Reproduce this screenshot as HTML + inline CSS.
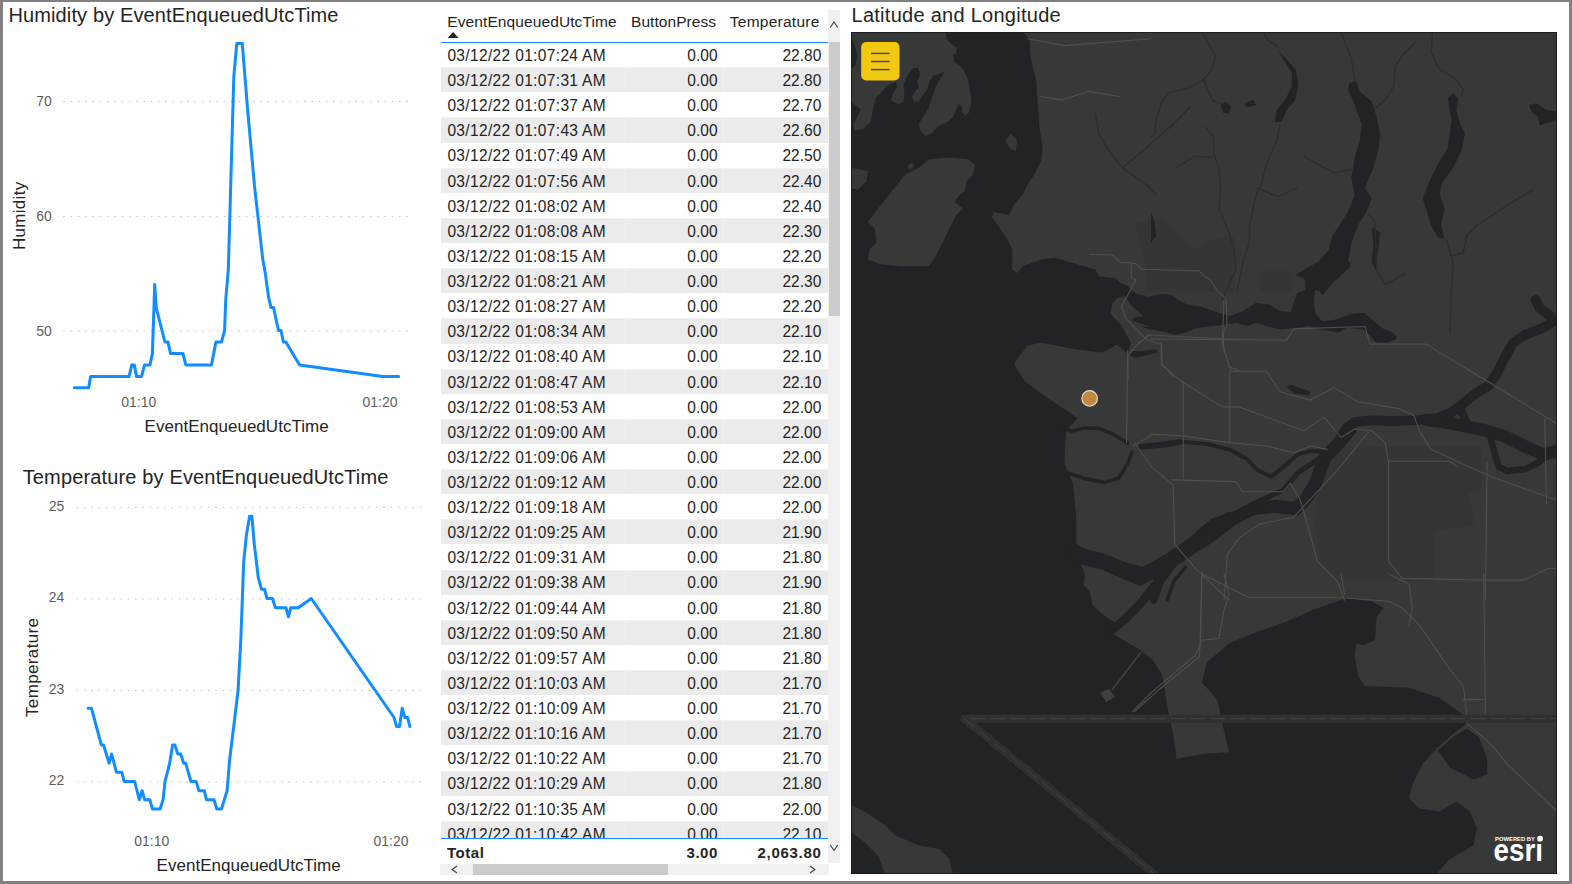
<!DOCTYPE html>
<html><head><meta charset="utf-8"><style>
html,body{margin:0;padding:0;}
body{width:1572px;height:884px;position:relative;overflow:hidden;background:#808080;font-family:"Liberation Sans", sans-serif;}
#w{position:absolute;left:3px;top:2px;width:1566px;height:879px;background:#fff;}
.t{position:absolute;white-space:nowrap;font-family:"Liberation Sans", sans-serif;}
</style></head><body><div id="w"></div>
<div class="t" style="left:8.40px;top:5.07px;font-size:20px;line-height:20px;color:#252423;font-weight:normal;letter-spacing:0.13px;">Humidity by EventEnqueuedUtcTime</div><div class="t" style="left:851.50px;top:5.07px;font-size:20px;line-height:20px;color:#252423;font-weight:normal;letter-spacing:0.27px;">Latitude and Longitude</div><div class="t" style="left:22.70px;top:467.07px;font-size:20px;line-height:20px;color:#252423;font-weight:normal;letter-spacing:0.15px;">Temperature by EventEnqueuedUtcTime</div><div style="position:absolute;left:441px;top:43px;width:387px;height:795px;overflow:hidden;"><div style="position:absolute;left:0;top:-0.92px;width:387px;height:25.12px;background:#ffffff;"></div><div class="t" style="left:6.40px;top:4.96px;font-size:15.5px;line-height:15.5px;color:#252423;font-weight:normal;letter-spacing:0.35px;transform:scaleY(1.08);transform-origin:0 13.12px;">03/12/22 01:07:24 AM</div><div class="t" style="left:0;width:276.5px;text-align:right;top:4.96px;font-size:15.5px;line-height:15.5px;color:#252423;transform:scaleY(1.08);transform-origin:0 13.12px;">0.00</div><div class="t" style="left:0;width:380.3px;text-align:right;top:4.96px;font-size:15.5px;line-height:15.5px;color:#252423;transform:scaleY(1.08);transform-origin:0 13.12px;">22.80</div><div style="position:absolute;left:0;top:24.20px;width:387px;height:25.12px;background:#ebebeb;"></div><div style="position:absolute;left:0;top:24.20px;width:387px;height:1px;background:#f1f1f1;"></div><div class="t" style="left:6.40px;top:30.08px;font-size:15.5px;line-height:15.5px;color:#252423;font-weight:normal;letter-spacing:0.35px;transform:scaleY(1.08);transform-origin:0 13.12px;">03/12/22 01:07:31 AM</div><div class="t" style="left:0;width:276.5px;text-align:right;top:30.08px;font-size:15.5px;line-height:15.5px;color:#252423;transform:scaleY(1.08);transform-origin:0 13.12px;">0.00</div><div class="t" style="left:0;width:380.3px;text-align:right;top:30.08px;font-size:15.5px;line-height:15.5px;color:#252423;transform:scaleY(1.08);transform-origin:0 13.12px;">22.80</div><div style="position:absolute;left:0;top:49.32px;width:387px;height:25.12px;background:#ffffff;"></div><div class="t" style="left:6.40px;top:55.20px;font-size:15.5px;line-height:15.5px;color:#252423;font-weight:normal;letter-spacing:0.35px;transform:scaleY(1.08);transform-origin:0 13.12px;">03/12/22 01:07:37 AM</div><div class="t" style="left:0;width:276.5px;text-align:right;top:55.20px;font-size:15.5px;line-height:15.5px;color:#252423;transform:scaleY(1.08);transform-origin:0 13.12px;">0.00</div><div class="t" style="left:0;width:380.3px;text-align:right;top:55.20px;font-size:15.5px;line-height:15.5px;color:#252423;transform:scaleY(1.08);transform-origin:0 13.12px;">22.70</div><div style="position:absolute;left:0;top:74.44px;width:387px;height:25.12px;background:#ebebeb;"></div><div style="position:absolute;left:0;top:74.44px;width:387px;height:1px;background:#f1f1f1;"></div><div class="t" style="left:6.40px;top:80.32px;font-size:15.5px;line-height:15.5px;color:#252423;font-weight:normal;letter-spacing:0.35px;transform:scaleY(1.08);transform-origin:0 13.12px;">03/12/22 01:07:43 AM</div><div class="t" style="left:0;width:276.5px;text-align:right;top:80.32px;font-size:15.5px;line-height:15.5px;color:#252423;transform:scaleY(1.08);transform-origin:0 13.12px;">0.00</div><div class="t" style="left:0;width:380.3px;text-align:right;top:80.32px;font-size:15.5px;line-height:15.5px;color:#252423;transform:scaleY(1.08);transform-origin:0 13.12px;">22.60</div><div style="position:absolute;left:0;top:99.56px;width:387px;height:25.12px;background:#ffffff;"></div><div class="t" style="left:6.40px;top:105.44px;font-size:15.5px;line-height:15.5px;color:#252423;font-weight:normal;letter-spacing:0.35px;transform:scaleY(1.08);transform-origin:0 13.12px;">03/12/22 01:07:49 AM</div><div class="t" style="left:0;width:276.5px;text-align:right;top:105.44px;font-size:15.5px;line-height:15.5px;color:#252423;transform:scaleY(1.08);transform-origin:0 13.12px;">0.00</div><div class="t" style="left:0;width:380.3px;text-align:right;top:105.44px;font-size:15.5px;line-height:15.5px;color:#252423;transform:scaleY(1.08);transform-origin:0 13.12px;">22.50</div><div style="position:absolute;left:0;top:124.68px;width:387px;height:25.12px;background:#ebebeb;"></div><div style="position:absolute;left:0;top:124.68px;width:387px;height:1px;background:#f1f1f1;"></div><div class="t" style="left:6.40px;top:130.56px;font-size:15.5px;line-height:15.5px;color:#252423;font-weight:normal;letter-spacing:0.35px;transform:scaleY(1.08);transform-origin:0 13.12px;">03/12/22 01:07:56 AM</div><div class="t" style="left:0;width:276.5px;text-align:right;top:130.56px;font-size:15.5px;line-height:15.5px;color:#252423;transform:scaleY(1.08);transform-origin:0 13.12px;">0.00</div><div class="t" style="left:0;width:380.3px;text-align:right;top:130.56px;font-size:15.5px;line-height:15.5px;color:#252423;transform:scaleY(1.08);transform-origin:0 13.12px;">22.40</div><div style="position:absolute;left:0;top:149.80px;width:387px;height:25.12px;background:#ffffff;"></div><div class="t" style="left:6.40px;top:155.68px;font-size:15.5px;line-height:15.5px;color:#252423;font-weight:normal;letter-spacing:0.35px;transform:scaleY(1.08);transform-origin:0 13.12px;">03/12/22 01:08:02 AM</div><div class="t" style="left:0;width:276.5px;text-align:right;top:155.68px;font-size:15.5px;line-height:15.5px;color:#252423;transform:scaleY(1.08);transform-origin:0 13.12px;">0.00</div><div class="t" style="left:0;width:380.3px;text-align:right;top:155.68px;font-size:15.5px;line-height:15.5px;color:#252423;transform:scaleY(1.08);transform-origin:0 13.12px;">22.40</div><div style="position:absolute;left:0;top:174.92px;width:387px;height:25.12px;background:#ebebeb;"></div><div style="position:absolute;left:0;top:174.92px;width:387px;height:1px;background:#f1f1f1;"></div><div class="t" style="left:6.40px;top:180.80px;font-size:15.5px;line-height:15.5px;color:#252423;font-weight:normal;letter-spacing:0.35px;transform:scaleY(1.08);transform-origin:0 13.12px;">03/12/22 01:08:08 AM</div><div class="t" style="left:0;width:276.5px;text-align:right;top:180.80px;font-size:15.5px;line-height:15.5px;color:#252423;transform:scaleY(1.08);transform-origin:0 13.12px;">0.00</div><div class="t" style="left:0;width:380.3px;text-align:right;top:180.80px;font-size:15.5px;line-height:15.5px;color:#252423;transform:scaleY(1.08);transform-origin:0 13.12px;">22.30</div><div style="position:absolute;left:0;top:200.04px;width:387px;height:25.12px;background:#ffffff;"></div><div class="t" style="left:6.40px;top:205.92px;font-size:15.5px;line-height:15.5px;color:#252423;font-weight:normal;letter-spacing:0.35px;transform:scaleY(1.08);transform-origin:0 13.12px;">03/12/22 01:08:15 AM</div><div class="t" style="left:0;width:276.5px;text-align:right;top:205.92px;font-size:15.5px;line-height:15.5px;color:#252423;transform:scaleY(1.08);transform-origin:0 13.12px;">0.00</div><div class="t" style="left:0;width:380.3px;text-align:right;top:205.92px;font-size:15.5px;line-height:15.5px;color:#252423;transform:scaleY(1.08);transform-origin:0 13.12px;">22.20</div><div style="position:absolute;left:0;top:225.16px;width:387px;height:25.12px;background:#ebebeb;"></div><div style="position:absolute;left:0;top:225.16px;width:387px;height:1px;background:#f1f1f1;"></div><div class="t" style="left:6.40px;top:231.04px;font-size:15.5px;line-height:15.5px;color:#252423;font-weight:normal;letter-spacing:0.35px;transform:scaleY(1.08);transform-origin:0 13.12px;">03/12/22 01:08:21 AM</div><div class="t" style="left:0;width:276.5px;text-align:right;top:231.04px;font-size:15.5px;line-height:15.5px;color:#252423;transform:scaleY(1.08);transform-origin:0 13.12px;">0.00</div><div class="t" style="left:0;width:380.3px;text-align:right;top:231.04px;font-size:15.5px;line-height:15.5px;color:#252423;transform:scaleY(1.08);transform-origin:0 13.12px;">22.30</div><div style="position:absolute;left:0;top:250.28px;width:387px;height:25.12px;background:#ffffff;"></div><div class="t" style="left:6.40px;top:256.16px;font-size:15.5px;line-height:15.5px;color:#252423;font-weight:normal;letter-spacing:0.35px;transform:scaleY(1.08);transform-origin:0 13.12px;">03/12/22 01:08:27 AM</div><div class="t" style="left:0;width:276.5px;text-align:right;top:256.16px;font-size:15.5px;line-height:15.5px;color:#252423;transform:scaleY(1.08);transform-origin:0 13.12px;">0.00</div><div class="t" style="left:0;width:380.3px;text-align:right;top:256.16px;font-size:15.5px;line-height:15.5px;color:#252423;transform:scaleY(1.08);transform-origin:0 13.12px;">22.20</div><div style="position:absolute;left:0;top:275.40px;width:387px;height:25.12px;background:#ebebeb;"></div><div style="position:absolute;left:0;top:275.40px;width:387px;height:1px;background:#f1f1f1;"></div><div class="t" style="left:6.40px;top:281.28px;font-size:15.5px;line-height:15.5px;color:#252423;font-weight:normal;letter-spacing:0.35px;transform:scaleY(1.08);transform-origin:0 13.12px;">03/12/22 01:08:34 AM</div><div class="t" style="left:0;width:276.5px;text-align:right;top:281.28px;font-size:15.5px;line-height:15.5px;color:#252423;transform:scaleY(1.08);transform-origin:0 13.12px;">0.00</div><div class="t" style="left:0;width:380.3px;text-align:right;top:281.28px;font-size:15.5px;line-height:15.5px;color:#252423;transform:scaleY(1.08);transform-origin:0 13.12px;">22.10</div><div style="position:absolute;left:0;top:300.52px;width:387px;height:25.12px;background:#ffffff;"></div><div class="t" style="left:6.40px;top:306.40px;font-size:15.5px;line-height:15.5px;color:#252423;font-weight:normal;letter-spacing:0.35px;transform:scaleY(1.08);transform-origin:0 13.12px;">03/12/22 01:08:40 AM</div><div class="t" style="left:0;width:276.5px;text-align:right;top:306.40px;font-size:15.5px;line-height:15.5px;color:#252423;transform:scaleY(1.08);transform-origin:0 13.12px;">0.00</div><div class="t" style="left:0;width:380.3px;text-align:right;top:306.40px;font-size:15.5px;line-height:15.5px;color:#252423;transform:scaleY(1.08);transform-origin:0 13.12px;">22.10</div><div style="position:absolute;left:0;top:325.64px;width:387px;height:25.12px;background:#ebebeb;"></div><div style="position:absolute;left:0;top:325.64px;width:387px;height:1px;background:#f1f1f1;"></div><div class="t" style="left:6.40px;top:331.52px;font-size:15.5px;line-height:15.5px;color:#252423;font-weight:normal;letter-spacing:0.35px;transform:scaleY(1.08);transform-origin:0 13.12px;">03/12/22 01:08:47 AM</div><div class="t" style="left:0;width:276.5px;text-align:right;top:331.52px;font-size:15.5px;line-height:15.5px;color:#252423;transform:scaleY(1.08);transform-origin:0 13.12px;">0.00</div><div class="t" style="left:0;width:380.3px;text-align:right;top:331.52px;font-size:15.5px;line-height:15.5px;color:#252423;transform:scaleY(1.08);transform-origin:0 13.12px;">22.10</div><div style="position:absolute;left:0;top:350.76px;width:387px;height:25.12px;background:#ffffff;"></div><div class="t" style="left:6.40px;top:356.64px;font-size:15.5px;line-height:15.5px;color:#252423;font-weight:normal;letter-spacing:0.35px;transform:scaleY(1.08);transform-origin:0 13.12px;">03/12/22 01:08:53 AM</div><div class="t" style="left:0;width:276.5px;text-align:right;top:356.64px;font-size:15.5px;line-height:15.5px;color:#252423;transform:scaleY(1.08);transform-origin:0 13.12px;">0.00</div><div class="t" style="left:0;width:380.3px;text-align:right;top:356.64px;font-size:15.5px;line-height:15.5px;color:#252423;transform:scaleY(1.08);transform-origin:0 13.12px;">22.00</div><div style="position:absolute;left:0;top:375.88px;width:387px;height:25.12px;background:#ebebeb;"></div><div style="position:absolute;left:0;top:375.88px;width:387px;height:1px;background:#f1f1f1;"></div><div class="t" style="left:6.40px;top:381.76px;font-size:15.5px;line-height:15.5px;color:#252423;font-weight:normal;letter-spacing:0.35px;transform:scaleY(1.08);transform-origin:0 13.12px;">03/12/22 01:09:00 AM</div><div class="t" style="left:0;width:276.5px;text-align:right;top:381.76px;font-size:15.5px;line-height:15.5px;color:#252423;transform:scaleY(1.08);transform-origin:0 13.12px;">0.00</div><div class="t" style="left:0;width:380.3px;text-align:right;top:381.76px;font-size:15.5px;line-height:15.5px;color:#252423;transform:scaleY(1.08);transform-origin:0 13.12px;">22.00</div><div style="position:absolute;left:0;top:401.00px;width:387px;height:25.12px;background:#ffffff;"></div><div class="t" style="left:6.40px;top:406.88px;font-size:15.5px;line-height:15.5px;color:#252423;font-weight:normal;letter-spacing:0.35px;transform:scaleY(1.08);transform-origin:0 13.12px;">03/12/22 01:09:06 AM</div><div class="t" style="left:0;width:276.5px;text-align:right;top:406.88px;font-size:15.5px;line-height:15.5px;color:#252423;transform:scaleY(1.08);transform-origin:0 13.12px;">0.00</div><div class="t" style="left:0;width:380.3px;text-align:right;top:406.88px;font-size:15.5px;line-height:15.5px;color:#252423;transform:scaleY(1.08);transform-origin:0 13.12px;">22.00</div><div style="position:absolute;left:0;top:426.12px;width:387px;height:25.12px;background:#ebebeb;"></div><div style="position:absolute;left:0;top:426.12px;width:387px;height:1px;background:#f1f1f1;"></div><div class="t" style="left:6.40px;top:432.00px;font-size:15.5px;line-height:15.5px;color:#252423;font-weight:normal;letter-spacing:0.35px;transform:scaleY(1.08);transform-origin:0 13.12px;">03/12/22 01:09:12 AM</div><div class="t" style="left:0;width:276.5px;text-align:right;top:432.00px;font-size:15.5px;line-height:15.5px;color:#252423;transform:scaleY(1.08);transform-origin:0 13.12px;">0.00</div><div class="t" style="left:0;width:380.3px;text-align:right;top:432.00px;font-size:15.5px;line-height:15.5px;color:#252423;transform:scaleY(1.08);transform-origin:0 13.12px;">22.00</div><div style="position:absolute;left:0;top:451.24px;width:387px;height:25.12px;background:#ffffff;"></div><div class="t" style="left:6.40px;top:457.12px;font-size:15.5px;line-height:15.5px;color:#252423;font-weight:normal;letter-spacing:0.35px;transform:scaleY(1.08);transform-origin:0 13.12px;">03/12/22 01:09:18 AM</div><div class="t" style="left:0;width:276.5px;text-align:right;top:457.12px;font-size:15.5px;line-height:15.5px;color:#252423;transform:scaleY(1.08);transform-origin:0 13.12px;">0.00</div><div class="t" style="left:0;width:380.3px;text-align:right;top:457.12px;font-size:15.5px;line-height:15.5px;color:#252423;transform:scaleY(1.08);transform-origin:0 13.12px;">22.00</div><div style="position:absolute;left:0;top:476.36px;width:387px;height:25.12px;background:#ebebeb;"></div><div style="position:absolute;left:0;top:476.36px;width:387px;height:1px;background:#f1f1f1;"></div><div class="t" style="left:6.40px;top:482.24px;font-size:15.5px;line-height:15.5px;color:#252423;font-weight:normal;letter-spacing:0.35px;transform:scaleY(1.08);transform-origin:0 13.12px;">03/12/22 01:09:25 AM</div><div class="t" style="left:0;width:276.5px;text-align:right;top:482.24px;font-size:15.5px;line-height:15.5px;color:#252423;transform:scaleY(1.08);transform-origin:0 13.12px;">0.00</div><div class="t" style="left:0;width:380.3px;text-align:right;top:482.24px;font-size:15.5px;line-height:15.5px;color:#252423;transform:scaleY(1.08);transform-origin:0 13.12px;">21.90</div><div style="position:absolute;left:0;top:501.48px;width:387px;height:25.12px;background:#ffffff;"></div><div class="t" style="left:6.40px;top:507.36px;font-size:15.5px;line-height:15.5px;color:#252423;font-weight:normal;letter-spacing:0.35px;transform:scaleY(1.08);transform-origin:0 13.12px;">03/12/22 01:09:31 AM</div><div class="t" style="left:0;width:276.5px;text-align:right;top:507.36px;font-size:15.5px;line-height:15.5px;color:#252423;transform:scaleY(1.08);transform-origin:0 13.12px;">0.00</div><div class="t" style="left:0;width:380.3px;text-align:right;top:507.36px;font-size:15.5px;line-height:15.5px;color:#252423;transform:scaleY(1.08);transform-origin:0 13.12px;">21.80</div><div style="position:absolute;left:0;top:526.60px;width:387px;height:25.12px;background:#ebebeb;"></div><div style="position:absolute;left:0;top:526.60px;width:387px;height:1px;background:#f1f1f1;"></div><div class="t" style="left:6.40px;top:532.48px;font-size:15.5px;line-height:15.5px;color:#252423;font-weight:normal;letter-spacing:0.35px;transform:scaleY(1.08);transform-origin:0 13.12px;">03/12/22 01:09:38 AM</div><div class="t" style="left:0;width:276.5px;text-align:right;top:532.48px;font-size:15.5px;line-height:15.5px;color:#252423;transform:scaleY(1.08);transform-origin:0 13.12px;">0.00</div><div class="t" style="left:0;width:380.3px;text-align:right;top:532.48px;font-size:15.5px;line-height:15.5px;color:#252423;transform:scaleY(1.08);transform-origin:0 13.12px;">21.90</div><div style="position:absolute;left:0;top:551.72px;width:387px;height:25.12px;background:#ffffff;"></div><div class="t" style="left:6.40px;top:557.60px;font-size:15.5px;line-height:15.5px;color:#252423;font-weight:normal;letter-spacing:0.35px;transform:scaleY(1.08);transform-origin:0 13.12px;">03/12/22 01:09:44 AM</div><div class="t" style="left:0;width:276.5px;text-align:right;top:557.60px;font-size:15.5px;line-height:15.5px;color:#252423;transform:scaleY(1.08);transform-origin:0 13.12px;">0.00</div><div class="t" style="left:0;width:380.3px;text-align:right;top:557.60px;font-size:15.5px;line-height:15.5px;color:#252423;transform:scaleY(1.08);transform-origin:0 13.12px;">21.80</div><div style="position:absolute;left:0;top:576.84px;width:387px;height:25.12px;background:#ebebeb;"></div><div style="position:absolute;left:0;top:576.84px;width:387px;height:1px;background:#f1f1f1;"></div><div class="t" style="left:6.40px;top:582.72px;font-size:15.5px;line-height:15.5px;color:#252423;font-weight:normal;letter-spacing:0.35px;transform:scaleY(1.08);transform-origin:0 13.12px;">03/12/22 01:09:50 AM</div><div class="t" style="left:0;width:276.5px;text-align:right;top:582.72px;font-size:15.5px;line-height:15.5px;color:#252423;transform:scaleY(1.08);transform-origin:0 13.12px;">0.00</div><div class="t" style="left:0;width:380.3px;text-align:right;top:582.72px;font-size:15.5px;line-height:15.5px;color:#252423;transform:scaleY(1.08);transform-origin:0 13.12px;">21.80</div><div style="position:absolute;left:0;top:601.96px;width:387px;height:25.12px;background:#ffffff;"></div><div class="t" style="left:6.40px;top:607.84px;font-size:15.5px;line-height:15.5px;color:#252423;font-weight:normal;letter-spacing:0.35px;transform:scaleY(1.08);transform-origin:0 13.12px;">03/12/22 01:09:57 AM</div><div class="t" style="left:0;width:276.5px;text-align:right;top:607.84px;font-size:15.5px;line-height:15.5px;color:#252423;transform:scaleY(1.08);transform-origin:0 13.12px;">0.00</div><div class="t" style="left:0;width:380.3px;text-align:right;top:607.84px;font-size:15.5px;line-height:15.5px;color:#252423;transform:scaleY(1.08);transform-origin:0 13.12px;">21.80</div><div style="position:absolute;left:0;top:627.08px;width:387px;height:25.12px;background:#ebebeb;"></div><div style="position:absolute;left:0;top:627.08px;width:387px;height:1px;background:#f1f1f1;"></div><div class="t" style="left:6.40px;top:632.96px;font-size:15.5px;line-height:15.5px;color:#252423;font-weight:normal;letter-spacing:0.35px;transform:scaleY(1.08);transform-origin:0 13.12px;">03/12/22 01:10:03 AM</div><div class="t" style="left:0;width:276.5px;text-align:right;top:632.96px;font-size:15.5px;line-height:15.5px;color:#252423;transform:scaleY(1.08);transform-origin:0 13.12px;">0.00</div><div class="t" style="left:0;width:380.3px;text-align:right;top:632.96px;font-size:15.5px;line-height:15.5px;color:#252423;transform:scaleY(1.08);transform-origin:0 13.12px;">21.70</div><div style="position:absolute;left:0;top:652.20px;width:387px;height:25.12px;background:#ffffff;"></div><div class="t" style="left:6.40px;top:658.08px;font-size:15.5px;line-height:15.5px;color:#252423;font-weight:normal;letter-spacing:0.35px;transform:scaleY(1.08);transform-origin:0 13.12px;">03/12/22 01:10:09 AM</div><div class="t" style="left:0;width:276.5px;text-align:right;top:658.08px;font-size:15.5px;line-height:15.5px;color:#252423;transform:scaleY(1.08);transform-origin:0 13.12px;">0.00</div><div class="t" style="left:0;width:380.3px;text-align:right;top:658.08px;font-size:15.5px;line-height:15.5px;color:#252423;transform:scaleY(1.08);transform-origin:0 13.12px;">21.70</div><div style="position:absolute;left:0;top:677.32px;width:387px;height:25.12px;background:#ebebeb;"></div><div style="position:absolute;left:0;top:677.32px;width:387px;height:1px;background:#f1f1f1;"></div><div class="t" style="left:6.40px;top:683.20px;font-size:15.5px;line-height:15.5px;color:#252423;font-weight:normal;letter-spacing:0.35px;transform:scaleY(1.08);transform-origin:0 13.12px;">03/12/22 01:10:16 AM</div><div class="t" style="left:0;width:276.5px;text-align:right;top:683.20px;font-size:15.5px;line-height:15.5px;color:#252423;transform:scaleY(1.08);transform-origin:0 13.12px;">0.00</div><div class="t" style="left:0;width:380.3px;text-align:right;top:683.20px;font-size:15.5px;line-height:15.5px;color:#252423;transform:scaleY(1.08);transform-origin:0 13.12px;">21.70</div><div style="position:absolute;left:0;top:702.44px;width:387px;height:25.12px;background:#ffffff;"></div><div class="t" style="left:6.40px;top:708.32px;font-size:15.5px;line-height:15.5px;color:#252423;font-weight:normal;letter-spacing:0.35px;transform:scaleY(1.08);transform-origin:0 13.12px;">03/12/22 01:10:22 AM</div><div class="t" style="left:0;width:276.5px;text-align:right;top:708.32px;font-size:15.5px;line-height:15.5px;color:#252423;transform:scaleY(1.08);transform-origin:0 13.12px;">0.00</div><div class="t" style="left:0;width:380.3px;text-align:right;top:708.32px;font-size:15.5px;line-height:15.5px;color:#252423;transform:scaleY(1.08);transform-origin:0 13.12px;">21.70</div><div style="position:absolute;left:0;top:727.56px;width:387px;height:25.12px;background:#ebebeb;"></div><div style="position:absolute;left:0;top:727.56px;width:387px;height:1px;background:#f1f1f1;"></div><div class="t" style="left:6.40px;top:733.44px;font-size:15.5px;line-height:15.5px;color:#252423;font-weight:normal;letter-spacing:0.35px;transform:scaleY(1.08);transform-origin:0 13.12px;">03/12/22 01:10:29 AM</div><div class="t" style="left:0;width:276.5px;text-align:right;top:733.44px;font-size:15.5px;line-height:15.5px;color:#252423;transform:scaleY(1.08);transform-origin:0 13.12px;">0.00</div><div class="t" style="left:0;width:380.3px;text-align:right;top:733.44px;font-size:15.5px;line-height:15.5px;color:#252423;transform:scaleY(1.08);transform-origin:0 13.12px;">21.80</div><div style="position:absolute;left:0;top:752.68px;width:387px;height:25.12px;background:#ffffff;"></div><div class="t" style="left:6.40px;top:758.56px;font-size:15.5px;line-height:15.5px;color:#252423;font-weight:normal;letter-spacing:0.35px;transform:scaleY(1.08);transform-origin:0 13.12px;">03/12/22 01:10:35 AM</div><div class="t" style="left:0;width:276.5px;text-align:right;top:758.56px;font-size:15.5px;line-height:15.5px;color:#252423;transform:scaleY(1.08);transform-origin:0 13.12px;">0.00</div><div class="t" style="left:0;width:380.3px;text-align:right;top:758.56px;font-size:15.5px;line-height:15.5px;color:#252423;transform:scaleY(1.08);transform-origin:0 13.12px;">22.00</div><div style="position:absolute;left:0;top:777.80px;width:387px;height:25.12px;background:#ebebeb;"></div><div style="position:absolute;left:0;top:777.80px;width:387px;height:1px;background:#f1f1f1;"></div><div class="t" style="left:6.40px;top:783.68px;font-size:15.5px;line-height:15.5px;color:#252423;font-weight:normal;letter-spacing:0.35px;transform:scaleY(1.08);transform-origin:0 13.12px;">03/12/22 01:10:42 AM</div><div class="t" style="left:0;width:276.5px;text-align:right;top:783.68px;font-size:15.5px;line-height:15.5px;color:#252423;transform:scaleY(1.08);transform-origin:0 13.12px;">0.00</div><div class="t" style="left:0;width:380.3px;text-align:right;top:783.68px;font-size:15.5px;line-height:15.5px;color:#252423;transform:scaleY(1.08);transform-origin:0 13.12px;">22.10</div><div style="position:absolute;left:184.3px;top:0;width:1px;height:795px;background:rgba(255,255,255,0.35);"></div><div style="position:absolute;left:282.3px;top:0;width:1px;height:795px;background:rgba(255,255,255,0.35);"></div></div><div class="t" style="left:447.30px;top:13.88px;font-size:15.5px;line-height:15.5px;color:#252423;font-weight:normal;letter-spacing:0.1px;">EventEnqueuedUtcTime</div><div class="t" style="left:631.00px;top:13.88px;font-size:15.5px;line-height:15.5px;color:#252423;font-weight:normal;letter-spacing:0.06px;">ButtonPress</div><div class="t" style="left:729.80px;top:13.88px;font-size:15.5px;line-height:15.5px;color:#252423;font-weight:normal;letter-spacing:0.25px;">Temperature</div><svg style="position:absolute;left:447px;top:31px" width="13" height="8"><polygon points="0.6,7 6.1,1 11.8,7" fill="#252423"/></svg><div style="position:absolute;left:441px;top:42px;width:387px;height:1px;background:#118dff;"></div><div style="position:absolute;left:441px;top:838px;width:387px;height:1px;background:#118dff;"></div><div class="t" style="left:447.00px;top:845.30px;font-size:15px;line-height:15px;color:#252423;font-weight:bold;letter-spacing:0.55px;">Total</div><div class="t" style="left:441px;width:276.8px;text-align:right;top:845.30px;font-size:15px;line-height:15px;font-weight:bold;letter-spacing:0.5px;color:#252423;">3.00</div><div class="t" style="left:441px;width:380.5px;text-align:right;top:845.30px;font-size:15px;line-height:15px;font-weight:bold;letter-spacing:0.7px;color:#252423;">2,063.80</div><div style="position:absolute;left:828px;top:10px;width:12px;height:853px;background:#f0f0f0;"></div><div style="position:absolute;left:829px;top:42px;width:11px;height:274px;background:#cbcbcb;"></div><svg style="position:absolute;left:828px;top:18px" width="12" height="12"><polyline points="2.3,9.5 6,4 9.7,9.5" fill="none" stroke="#404040" stroke-width="1.1"/></svg><svg style="position:absolute;left:828px;top:842px" width="12" height="12"><polyline points="2.3,3 6,8.5 9.7,3" fill="none" stroke="#404040" stroke-width="1.1"/></svg><div style="position:absolute;left:440px;top:864px;width:389px;height:11px;background:#f0f0f0;"></div><div style="position:absolute;left:473px;top:864px;width:195px;height:11px;background:#cbcbcb;"></div><svg style="position:absolute;left:448px;top:864px" width="12" height="11"><polyline points="9,2 4,5.5 9,9" fill="none" stroke="#404040" stroke-width="1.1"/></svg><svg style="position:absolute;left:807px;top:864px" width="12" height="11"><polyline points="3,2 8,5.5 3,9" fill="none" stroke="#404040" stroke-width="1.1"/></svg><svg style="position:absolute;left:0;top:0" width="440" height="884"><line x1="63.2" y1="101.5" x2="409" y2="101.5" stroke="#c4c4c4" stroke-width="1" stroke-dasharray="1.6 5.7"/><line x1="63.2" y1="216.5" x2="409" y2="216.5" stroke="#c4c4c4" stroke-width="1" stroke-dasharray="1.6 5.7"/><line x1="63.2" y1="331" x2="409" y2="331" stroke="#c4c4c4" stroke-width="1" stroke-dasharray="1.6 5.7"/><line x1="76.6" y1="507.5" x2="422" y2="507.5" stroke="#c4c4c4" stroke-width="1" stroke-dasharray="1.6 5.7"/><line x1="76.6" y1="599" x2="422" y2="599" stroke="#c4c4c4" stroke-width="1" stroke-dasharray="1.6 5.7"/><line x1="76.6" y1="690.5" x2="422" y2="690.5" stroke="#c4c4c4" stroke-width="1" stroke-dasharray="1.6 5.7"/><line x1="76.6" y1="782" x2="422" y2="782" stroke="#c4c4c4" stroke-width="1" stroke-dasharray="1.6 5.7"/><clipPath id="hc"><rect x="60" y="42" width="360" height="360"/></clipPath><polyline clip-path="url(#hc)" points="74.4,387.8 88.7,387.8 90.6,376.4 129.1,376.4 131.8,364.9 134.3,364.9 136.5,376.4 141.6,376.4 144.5,364.9 150.0,364.9 152.4,353.4 154.7,284.6 156.2,307.6 164.9,342.0 168.0,342.0 170.5,353.4 182.9,353.4 185.8,364.9 211.5,364.9 215.9,342.0 221.5,342.0 224.6,330.5 225.8,298.6 228.3,270.0 230.7,186.0 233.8,76.7 236.8,43.6 242.3,43.6 247.7,110.7 254.5,186.0 262.8,259.6 265.3,273.2 268.5,296.9 271.0,307.6 273.5,307.6 278.5,330.5 281.0,330.5 283.4,342.0 285.9,342.0 299.6,364.9 382.9,376.4 398.6,376.4" fill="none" stroke="#118dff" stroke-width="3" stroke-linejoin="round" stroke-linecap="round"/><polyline points="88.1,708.3 91.5,708.3 101.3,744.9 103.5,744.9 109.1,763.2 111.6,754.0 116.5,772.3 121.9,772.3 124.1,781.5 134.7,781.5 139.3,799.8 142.1,790.7 144.7,799.8 149.9,799.8 152.4,809.0 160.1,809.0 163.1,799.8 165.0,781.5 169.7,763.2 172.6,744.9 174.9,744.9 177.8,754.0 180.7,754.0 183.7,763.2 185.6,763.2 191.0,781.5 196.2,781.5 198.8,790.7 204.3,790.7 206.5,799.8 214.1,799.8 216.8,809.0 221.5,809.0 227.1,790.7 229.7,759.0 233.7,726.8 238.1,690.0 240.8,640.0 243.7,561.8 246.4,534.9 249.6,516.2 251.9,516.2 254.3,544.4 258.3,577.7 261.5,589.3 264.6,589.3 267.0,598.5 272.5,598.5 275.4,607.7 286.0,607.7 288.4,616.8 290.8,607.7 298.2,607.7 311.3,598.5 394.0,717.5 396.7,726.6 399.5,726.6 402.2,708.3 404.9,717.5 407.6,717.5 409.9,726.6" fill="none" stroke="#118dff" stroke-width="3" stroke-linejoin="round" stroke-linecap="round"/></svg><div class="t" style="left:36.30px;top:94.15px;font-size:14px;line-height:14px;color:#605e5c;font-weight:normal;">70</div><div class="t" style="left:36.30px;top:209.15px;font-size:14px;line-height:14px;color:#605e5c;font-weight:normal;">60</div><div class="t" style="left:36.30px;top:324.15px;font-size:14px;line-height:14px;color:#605e5c;font-weight:normal;">50</div><div class="t" style="left:121.30px;top:395.15px;font-size:14px;line-height:14px;color:#605e5c;font-weight:normal;">01:10</div><div class="t" style="left:362.50px;top:395.15px;font-size:14px;line-height:14px;color:#605e5c;font-weight:normal;">01:20</div><div class="t" style="left:144.60px;top:417.61px;font-size:17px;line-height:17px;color:#252423;font-weight:normal;letter-spacing:0.02px;">EventEnqueuedUtcTime</div><div class="t" style="left:48.80px;top:499.15px;font-size:14px;line-height:14px;color:#605e5c;font-weight:normal;">25</div><div class="t" style="left:48.80px;top:590.45px;font-size:14px;line-height:14px;color:#605e5c;font-weight:normal;">24</div><div class="t" style="left:48.80px;top:681.95px;font-size:14px;line-height:14px;color:#605e5c;font-weight:normal;">23</div><div class="t" style="left:48.80px;top:773.45px;font-size:14px;line-height:14px;color:#605e5c;font-weight:normal;">22</div><div class="t" style="left:134.30px;top:834.15px;font-size:14px;line-height:14px;color:#605e5c;font-weight:normal;">01:10</div><div class="t" style="left:373.50px;top:834.15px;font-size:14px;line-height:14px;color:#605e5c;font-weight:normal;">01:20</div><div class="t" style="left:156.60px;top:856.61px;font-size:17px;line-height:17px;color:#252423;font-weight:normal;letter-spacing:0.02px;">EventEnqueuedUtcTime</div><div class="t" style="left:10.5px;top:250.2px;font-size:17px;line-height:17px;letter-spacing:0.3px;color:#252423;transform-origin:0 0;transform:rotate(-90deg);">Humidity</div><div class="t" style="left:24px;top:717px;font-size:17px;line-height:17px;letter-spacing:0.36px;color:#252423;transform-origin:0 0;transform:rotate(-90deg);">Temperature</div><svg style="position:absolute;left:851px;top:32px" width="706" height="842" viewBox="851 32 706 842"><rect x="851" y="32" width="706" height="842" fill="#373938"/>
<polygon fill="#343635" points="1318.0,446.0 1482.0,446.0 1482.0,490.0 1468.0,493.0 1476.0,525.0 1435.0,531.0 1435.0,581.0 1344.0,581.0 1321.0,563.0 1315.0,528.0"/>
<polygon fill="#343635" points="1146.0,265.0 1134.6,223.0 1163.5,219.0 1196.0,250.0 1215.0,238.5 1234.6,236.5 1234.6,292.0 1146.0,292.0"/>
<polygon fill="#343635" points="1259.6,271.0 1292.0,271.0 1292.0,292.0 1259.6,292.0"/>
<polygon fill="#202426" points="851.0,32.0 1022.4,32.0 1029.2,38.8 1030.9,59.1 1036.0,79.5 1037.6,99.9 1039.3,127.0 1042.7,147.4 1041.0,161.0 1034.3,174.5 1027.5,184.7 1022.4,194.9 1013.9,205.1 1008.8,215.3 993.5,211.9 991.8,217.0 1000.3,228.8 1007.1,239.0 1012.2,249.2 1012.2,269.6 1017.3,272.9 1022.4,266.2 1041.0,259.4 1054.6,257.7 1071.6,262.8 1095.3,269.6 1099.5,276.4 1115.3,278.0 1120.1,282.8 1128.0,285.9 1130.4,292.3 1124.8,295.4 1116.9,298.6 1112.2,303.4 1110.6,312.9 1115.3,319.2 1121.7,325.5 1126.4,335.0 1131.2,343.0 1128.0,354.1 1116.9,344.5 1105.8,350.9 1099.5,352.5 1090.0,350.9 1075.0,349.2 1041.0,342.4 1027.5,345.8 1015.6,361.1 1014.4,365.0 1024.7,381.2 1042.4,394.4 1060.0,406.2 1077.6,417.9 1065.9,431.2 1064.4,463.5 1073.2,484.1 1076.2,516.5 1076.2,551.8 1076.2,551.1 1084.9,574.7 1083.6,584.7 1089.9,592.1 1092.3,604.6 1099.8,612.0 1109.8,619.5 1117.2,623.2 1111.0,631.9 1122.2,639.4 1139.6,649.4 1152.0,659.3 1162.0,674.2 1164.5,689.2 1167.0,704.1 1169.5,717.8 1174.4,739.9 1176.5,759.0 1201.9,753.9 1229.1,752.2 1222.3,723.4 1217.2,699.6 1201.9,682.6 1207.0,662.3 1229.1,643.6 1252.8,633.4 1286.8,621.5 1313.9,609.6 1337.7,601.2 1346.2,597.8 1371.7,601.2 1383.5,607.9 1376.7,616.4 1375.0,640.2 1363.2,645.3 1356.4,643.6 1354.7,655.5 1358.1,675.8 1364.9,686.0 1409.0,687.7 1439.5,697.9 1461.6,713.2 1466.7,723.4 1451.4,735.2 1436.2,748.8 1422.6,764.1 1412.4,784.5 1409.0,798.0 1419.2,808.2 1439.5,811.6 1456.5,801.4 1470.1,811.6 1476.9,828.6 1473.5,845.6 1449.7,859.2 1436.2,874.1 851.0,874.0"/>
<polygon fill="#373938" points="851.0,32.0 945.6,32.0 946.9,39.5 950.6,43.2 957.4,48.2 955.6,53.8 953.1,55.0 954.3,61.9 958.1,64.4 963.0,69.3 968.0,79.3 970.5,91.8 971.1,104.2 968.6,112.9 964.9,115.4 962.4,112.9 961.8,106.7 959.3,104.2 956.8,107.9 953.1,116.7 948.1,121.6 938.1,126.6 930.7,134.1 925.7,135.9 920.7,131.6 918.8,124.1 923.2,116.7 928.2,109.2 930.7,101.7 933.2,94.2 935.7,86.8 944.4,71.8 938.1,74.3 933.2,75.6 929.4,81.8 926.9,90.5 923.2,94.2 918.8,101.7 914.5,101.7 912.0,96.7 915.7,90.5 918.8,88.0 917.0,81.8 920.1,74.3 918.2,68.1 913.2,68.1 908.3,74.3 903.3,84.3 904.5,93.0 903.3,101.7 898.3,104.2 890.8,100.5 893.3,93.0 897.1,86.8 895.8,81.8 887.1,85.5 880.9,93.0 875.9,98.0 873.4,106.7 870.9,121.6 863.4,129.1 854.7,130.3 853.5,124.1 858.5,114.2 861.0,109.2 851.0,101.7 851.0,69.3 856.0,64.4 857.2,54.4 854.7,44.4 851.0,37.0"/>
<polygon fill="#373938" points="851.0,167.7 868.0,171.1 866.3,181.3 857.8,189.8 851.0,188.1"/>
<polygon fill="#373938" points="868.0,222.0 878.1,208.5 891.7,191.5 905.3,174.5 918.9,167.7 929.1,159.3 949.4,157.6 968.1,159.3 974.9,164.4 973.2,174.5 966.4,181.3 964.7,191.5 959.6,194.9 954.5,201.7 963.0,208.5 956.2,215.3 949.4,228.8 942.6,242.4 935.8,256.0 929.1,266.2 901.9,266.2 881.5,264.5 868.0,259.4 869.7,249.2 876.5,242.4 874.8,228.8"/>
<polygon fill="#373938" points="1005.4,140.6 1010.5,133.8 1017.3,140.6 1015.6,150.8 1010.5,149.1"/>
<polygon fill="#373938" points="907.0,166.0 912.1,162.7 914.5,167.1 909.4,169.4"/>
<polygon fill="#373938" points="851.0,804.8 864.6,811.6 884.9,825.1 895.1,835.3 918.9,845.5 939.2,848.9 949.4,859.1 952.8,874.0 851.0,874.0"/>
<polygon fill="#202426" points="851.0,831.9 864.6,842.1 878.1,855.7 884.9,874.0 851.0,874.0"/>
<polygon fill="#202426" points="1128.0,285.9 1132.0,290.7 1137.5,293.9 1148.6,297.0 1159.7,293.9 1170.8,294.6 1178.7,300.2 1188.2,304.9 1200.9,306.5 1213.6,311.3 1224.6,314.4 1229.3,316.2 1242.5,311.2 1255.8,302.9 1269.0,304.6 1280.6,311.2 1290.5,312.0 1297.1,293.0 1305.4,289.7 1305.4,279.8 1295.5,274.8 1302.1,270.7 1318.6,261.6 1328.6,250.0 1332.6,235.7 1347.9,211.9 1354.7,194.9 1351.3,178.0 1354.7,157.6 1359.8,140.6 1361.5,123.7 1356.4,110.1 1353.0,99.9 1347.9,89.7 1349.6,82.9 1356.4,81.2 1359.8,91.4 1371.7,101.6 1376.7,116.9 1380.1,133.8 1378.4,150.8 1373.4,167.8 1364.9,188.2 1371.7,198.3 1366.6,211.9 1359.8,222.1 1351.3,242.5 1348.4,259.9 1350.9,265.7 1341.8,274.8 1333.5,282.3 1326.9,289.7 1322.8,295.5 1319.5,291.3 1315.3,289.7 1313.7,299.6 1315.3,312.9 1321.9,321.1 1336.8,319.5 1351.7,313.7 1363.3,312.9 1371.6,319.5 1379.8,327.7 1391.4,332.7 1396.4,336.0 1396.4,339.3 1388.1,342.6 1376.5,342.6 1371.6,336.0 1363.3,329.4 1346.7,327.7 1338.5,332.7 1321.9,329.4 1308.7,326.1 1297.1,327.7 1280.6,329.4 1265.7,326.1 1255.8,322.8 1247.5,326.1 1235.9,322.8 1226.0,324.4 1214.4,326.1 1197.9,327.7 1189.6,331.0 1173.1,334.4 1161.5,331.0 1149.9,329.4 1140.0,326.1 1188.2,331.9 1175.5,335.0 1164.4,331.9 1156.5,330.3 1147.0,325.5 1137.5,322.4 1131.2,320.8 1134.4,317.6 1143.9,316.0 1135.9,309.7 1129.6,303.4 1124.8,295.4"/>
<polygon fill="#202426" points="1131.2,350.9 1142.3,350.9 1156.5,349.3 1158.1,352.5 1145.4,355.6 1134.4,358.0 1128.8,354.8"/>
<polygon fill="#202426" points="1278.3,50.7 1285.1,57.5 1295.3,69.3 1298.7,82.9 1295.3,99.9 1286.8,110.1 1281.7,122.0 1274.9,122.0 1276.6,110.1 1285.1,99.9 1291.9,86.3 1291.9,72.7 1283.4,59.2"/>
<polygon fill="#202426" points="1220.6,105.0 1225.7,101.6 1230.8,106.7 1229.1,113.5 1223.0,112.8"/>
<polygon fill="#202426" points="1244.4,103.3 1252.8,99.9 1256.2,105.0 1246.1,107.4"/>
<polygon fill="#202426" points="1448.0,98.2 1453.1,93.1 1458.2,98.2 1456.5,110.1 1459.9,123.7 1465.0,133.8 1461.6,150.8 1453.1,167.8 1442.9,181.4 1439.5,193.2 1444.6,208.5 1441.2,225.5 1444.6,239.1 1437.8,237.4 1431.1,225.5 1426.0,208.5 1422.6,198.3 1429.4,181.4 1437.8,164.4 1448.0,147.4 1449.7,133.8 1451.4,120.3 1449.7,110.1"/>
<polygon fill="#202426" points="1529.5,105.0 1536.3,103.3 1546.5,110.1 1557.0,111.8 1557.0,120.3 1544.8,123.7 1539.7,125.4 1538.0,116.9 1531.2,111.8"/>
<polygon fill="#202426" points="1371.7,227.2 1380.1,232.3 1377.8,252.7 1375.7,269.6 1371.7,262.8 1373.4,245.9"/>
<polygon fill="#202426" points="1151.0,211.9 1154.4,222.1 1156.1,235.7 1151.0,242.5"/>
<polygon fill="#202426" points="1330.0,322.4 1340.2,318.3 1354.4,314.3 1364.6,313.2 1372.8,320.4 1382.9,328.5 1393.1,332.6 1396.2,337.7 1391.1,339.7 1374.8,341.7 1370.7,336.6 1362.6,328.5 1350.4,325.4 1338.1,330.5 1330.0,328.5"/>
<polygon fill="#202426" points="1286.8,386.6 1291.9,384.9 1310.5,391.7 1308.9,395.7 1293.6,393.4"/>
<polygon fill="#202426" points="1437.8,750.5 1453.1,736.9 1466.7,728.5 1478.6,736.9 1487.1,757.3 1487.1,774.3 1473.5,779.4 1449.7,767.5"/>
<polyline fill="none" stroke="#202426" stroke-width="9.77" stroke-linecap="round" stroke-linejoin="miter" stroke-miterlimit="3" points="1535.6,300.0 1539.7,308.1 1550.9,316.3 1551.9,322.4 1541.7,328.5 1525.4,334.6 1513.2,342.8 1505.1,357.0 1496.9,373.3 1488.8,385.5 1472.5,395.7 1460.3,405.9 1452.1,412.0 1437.9,418.1 1417.5,420.1 1391.1,421.1 1370.7,420.1 1354.4,422.1 1346.3,428.3 1340.2,438.4 1330.0,452.7"/>
<polyline fill="none" stroke="#202426" stroke-width="12.38" stroke-linecap="round" stroke-linejoin="miter" stroke-miterlimit="3" points="1557.0,450.7 1543.8,454.7 1525.4,446.6 1505.1,436.4 1484.7,430.3 1464.4,426.2 1444.0,422.1 1427.7,420.1"/>
<polyline fill="none" stroke="#202426" stroke-width="6.51" stroke-linecap="round" stroke-linejoin="miter" stroke-miterlimit="3" points="1490.8,438.4 1494.9,454.7 1499.0,466.9 1507.1,471.0 1525.4,469.0 1537.7,462.9 1549.9,452.7"/>
<polyline fill="none" stroke="#202426" stroke-width="8.14" stroke-linecap="round" stroke-linejoin="miter" stroke-miterlimit="3" points="1460.3,407.9 1467.4,425.2"/>
<polyline fill="none" stroke="#202426" stroke-width="13.03" stroke-linecap="round" stroke-linejoin="miter" stroke-miterlimit="3" points="1350.0,429.4 1339.1,443.0 1325.6,456.6 1321.0,467.9 1314.2,486.0 1305.2,499.6 1296.1,508.6 1275.8,506.4 1253.1,508.6 1235.0,517.7 1214.7,524.5 1201.1,535.8 1185.3,551.6 1167.2,560.7 1149.1,572.0 1140.0,578.8"/>
<polyline fill="none" stroke="#202426" stroke-width="5.07" stroke-linecap="round" stroke-linejoin="miter" stroke-miterlimit="3" points="1325.6,454.3 1298.4,472.4 1282.6,490.5 1253.1,504.1"/>
<polyline fill="none" stroke="#202426" stroke-width="3.98" stroke-linecap="round" stroke-linejoin="miter" stroke-miterlimit="3" points="1325.6,452.0 1312.0,450.9 1298.4,454.3 1284.8,465.6 1271.3,476.9 1257.7,470.2 1246.4,458.8 1230.5,449.8 1207.9,444.1 1185.3,441.9 1167.2,445.3 1153.6,446.4 1140.0,447.5"/>
<polyline fill="none" stroke="#202426" stroke-width="2.53" stroke-linecap="round" stroke-linejoin="miter" stroke-miterlimit="3" points="1180.7,440.3 1158.1,443.4 1140.0,445.3"/>
<polyline fill="none" stroke="#202426" stroke-width="7.24" stroke-linecap="round" stroke-linejoin="miter" stroke-miterlimit="3" points="1176.2,560.7 1162.6,576.5 1153.6,600.0"/>
<polyline fill="none" stroke="#202426" stroke-width="3.62" stroke-linecap="round" stroke-linejoin="miter" stroke-miterlimit="3" points="1185.3,567.5 1173.9,581.0 1167.2,600.0"/>
<polyline fill="none" stroke="#202426" stroke-width="3.53" stroke-linecap="round" stroke-linejoin="miter" stroke-miterlimit="3" points="1127.6,442.9 1112.9,434.1 1098.2,428.2 1083.5,428.2 1071.8,431.2 1061.5,428.2"/>
<polyline fill="none" stroke="#202426" stroke-width="3.53" stroke-linecap="round" stroke-linejoin="miter" stroke-miterlimit="3" points="1065.9,472.4 1083.5,478.2 1104.1,482.6 1118.8,478.2 1127.6,463.5 1132.1,451.8"/>
<polyline fill="none" stroke="#202426" stroke-width="10.35" stroke-linecap="round" stroke-linejoin="miter" stroke-miterlimit="3" points="1160.0,575.3 1142.4,572.4 1121.8,566.5 1098.2,557.6 1077.6,551.8 1068.8,551.8"/>
<polyline fill="none" stroke="#202426" stroke-width="15.92" stroke-linecap="round" stroke-linejoin="miter" stroke-miterlimit="3" points="1229.2,520.0 1209.3,534.9 1189.4,547.4 1171.9,559.8 1154.5,569.8 1139.6,577.2 1122.2,569.8 1104.8,562.3 1084.9,557.3 1074.9,552.3"/>
<polyline fill="none" stroke="#202426" stroke-width="8.76" stroke-linecap="round" stroke-linejoin="miter" stroke-miterlimit="3" points="1176.9,557.3 1164.5,574.7 1149.6,592.1 1139.6,604.6 1124.7,619.5 1112.2,629.5"/>
<polyline fill="none" stroke="#2c2e2e" stroke-width="1.30" stroke-linecap="round"  stroke-linejoin="round" points="1201.9,32.0 1215.5,55.8 1212.1,69.3 1203.6,79.5 1212.1,99.9 1218.9,103.3 1224.0,103.3"/>
<polyline fill="none" stroke="#2c2e2e" stroke-width="1.30" stroke-linecap="round"  stroke-linejoin="round" points="1203.6,79.5 1188.3,88.0 1168.0,93.1 1161.2,103.3 1156.1,120.3 1154.4,133.8 1151.0,137.2"/>
<polyline fill="none" stroke="#2c2e2e" stroke-width="1.30" stroke-linecap="round"  stroke-linejoin="round" points="1263.0,32.0 1268.1,40.5 1278.3,47.3"/>
<polyline fill="none" stroke="#2c2e2e" stroke-width="1.30" stroke-linecap="round"  stroke-linejoin="round" points="1341.1,32.0 1346.2,45.6 1351.3,59.2 1354.7,79.5"/>
<polyline fill="none" stroke="#2c2e2e" stroke-width="1.30" stroke-linecap="round"  stroke-linejoin="round" points="1415.8,42.2 1402.2,55.8 1395.4,65.9 1393.7,86.3 1385.2,99.9 1375.0,108.4"/>
<polyline fill="none" stroke="#2c2e2e" stroke-width="1.30" stroke-linecap="round"  stroke-linejoin="round" points="1432.8,32.0 1431.1,52.4 1439.5,69.3 1456.5,79.5 1463.3,89.7 1461.6,96.5"/>
<polyline fill="none" stroke="#2c2e2e" stroke-width="1.30" stroke-linecap="round"  stroke-linejoin="round" points="1205.3,127.1 1213.8,137.2 1213.8,154.2 1218.9,167.8 1220.6,191.5 1218.9,208.5 1229.1,232.3 1234.2,249.3 1235.9,269.6 1229.1,283.2 1222.3,300.2"/>
<polyline fill="none" stroke="#2c2e2e" stroke-width="1.30" stroke-linecap="round"  stroke-linejoin="round" points="1280.0,125.4 1276.6,140.6 1266.4,164.4 1261.3,184.8 1256.2,194.9 1249.4,225.5 1249.4,242.5 1242.7,262.8 1237.6,290.0"/>
<polyline fill="none" stroke="#2c2e2e" stroke-width="1.30" stroke-linecap="round"  stroke-linejoin="round" points="1176.5,167.8 1195.1,155.9 1212.1,157.6"/>
<polyline fill="none" stroke="#2c2e2e" stroke-width="1.30" stroke-linecap="round"  stroke-linejoin="round" points="1256.2,188.2 1278.3,196.6 1297.0,188.2"/>
<polyline fill="none" stroke="#2c2e2e" stroke-width="1.30" stroke-linecap="round"  stroke-linejoin="round" points="1303.8,155.9 1324.1,167.8 1334.3,172.9 1351.3,169.5"/>
<polyline fill="none" stroke="#2c2e2e" stroke-width="1.30" stroke-linecap="round"  stroke-linejoin="round" points="1368.3,213.6 1375.0,222.1 1376.7,269.6 1385.2,284.9 1405.6,273.0"/>
<polyline fill="none" stroke="#2c2e2e" stroke-width="1.30" stroke-linecap="round"  stroke-linejoin="round" points="1446.3,239.1 1453.1,262.8 1451.4,290.0 1449.7,332.1"/>
<polyline fill="none" stroke="#2c2e2e" stroke-width="1.30" stroke-linecap="round"  stroke-linejoin="round" points="1532.9,189.9 1507.4,205.1 1476.9,225.5 1466.7,235.7 1463.3,252.7 1453.1,256.0"/>
<polyline fill="none" stroke="#2c2e2e" stroke-width="1.30" stroke-linecap="round"  stroke-linejoin="round" points="1095.3,113.4 1098.7,133.8 1108.9,150.8 1122.5,167.7 1146.2,184.7 1156.4,194.9"/>
<polyline fill="none" stroke="#2c2e2e" stroke-width="1.30" stroke-linecap="round"  stroke-linejoin="round" points="1122.5,167.7 1142.9,150.8 1170.0,127.0 1190.4,106.7"/>
<polyline fill="none" stroke="#4e5050" stroke-width="1.10" stroke-linecap="round"  stroke-linejoin="round" points="1151.0,339.0 1286.8,340.1 1293.6,328.9 1364.9,326.5 1370.0,344.1 1426.0,344.1 1490.5,383.2 1557.0,423.9"/>
<polyline fill="none" stroke="#4e5050" stroke-width="1.10" stroke-linecap="round"  stroke-linejoin="round" points="1224.0,300.0 1222.3,344.1 1230.8,371.3 1266.4,371.3 1280.0,391.7 1310.5,400.1 1334.3,387.6 1358.1,401.8 1398.8,408.6 1414.1,415.4 1419.2,430.7 1431.1,449.4 1490.5,476.5 1557.0,500.3"/>
<polyline fill="none" stroke="#4e5050" stroke-width="1.10" stroke-linecap="round"  stroke-linejoin="round" points="1161.2,342.4 1161.2,364.5 1181.6,381.5 1222.3,406.9 1239.3,406.9 1303.8,430.7 1324.1,417.1 1341.1,437.5"/>
<polyline fill="none" stroke="#4e5050" stroke-width="1.10" stroke-linecap="round"  stroke-linejoin="round" points="1229.8,371.3 1229.8,442.6"/>
<polyline fill="none" stroke="#4e5050" stroke-width="1.10" stroke-linecap="round"  stroke-linejoin="round" points="1183.2,381.5 1183.2,479.9"/>
<polyline fill="none" stroke="#4e5050" stroke-width="1.10" stroke-linecap="round"  stroke-linejoin="round" points="1151.0,434.1 1181.6,435.8 1229.1,442.6 1266.4,446.0 1293.6,452.8 1310.5,446.0 1327.5,449.4"/>
<polyline fill="none" stroke="#4e5050" stroke-width="1.10" stroke-linecap="round"  stroke-linejoin="round" points="1151.0,466.3 1173.1,485.0 1174.8,544.4 1195.1,568.2 1229.1,600.1"/>
<polyline fill="none" stroke="#4e5050" stroke-width="1.10" stroke-linecap="round"  stroke-linejoin="round" points="1171.4,479.9 1235.9,481.6 1242.7,491.8 1283.4,491.8 1290.2,483.3 1300.4,500.3 1307.2,524.0 1317.3,561.4 1337.7,581.8 1344.5,600.1"/>
<polyline fill="none" stroke="#4e5050" stroke-width="1.10" stroke-linecap="round"  stroke-linejoin="round" points="1341.1,437.5 1354.7,429.0 1371.7,430.7 1385.2,442.6 1388.6,462.9 1388.6,561.4 1402.2,578.4 1483.7,580.1 1524.4,580.1 1548.2,568.2 1557.0,568.2"/>
<polyline fill="none" stroke="#4e5050" stroke-width="1.10" stroke-linecap="round"  stroke-linejoin="round" points="1388.6,461.2 1449.7,461.2 1456.5,466.3"/>
<polyline fill="none" stroke="#4e5050" stroke-width="1.10" stroke-linecap="round"  stroke-linejoin="round" points="1368.3,432.4 1337.7,469.7 1293.6,517.3"/>
<polyline fill="none" stroke="#4e5050" stroke-width="1.10" stroke-linecap="round"  stroke-linejoin="round" points="1293.6,517.3 1259.6,524.0 1239.3,537.6 1227.4,554.6 1224.0,600.1"/>
<polyline fill="none" stroke="#4e5050" stroke-width="1.10" stroke-linecap="round"  stroke-linejoin="round" points="1487.1,462.9 1485.4,600.1"/>
<polyline fill="none" stroke="#4e5050" stroke-width="1.10" stroke-linecap="round"  stroke-linejoin="round" points="1544.8,418.8 1546.5,503.7"/>
<polyline fill="none" stroke="#4e5050" stroke-width="1.10" stroke-linecap="round"  stroke-linejoin="round" points="1090.0,254.3 1112.2,255.0 1120.1,262.2 1131.2,263.0 1135.9,263.8 1142.3,269.3 1199.3,270.9 1204.1,276.4 1210.4,279.6 1218.3,292.3 1226.2,298.6 1227.0,325.5 1223.1,333.5 1223.9,349.3 1229.4,366.7 1240.0,371.5"/>
<polyline fill="none" stroke="#4e5050" stroke-width="1.10" stroke-linecap="round"  stroke-linejoin="round" points="1131.2,263.0 1131.2,278.0 1135.9,279.6 1121.7,306.5 1126.4,319.2 1147.0,339.8 1161.3,344.5 1162.1,363.6 1172.4,376.2"/>
<polyline fill="none" stroke="#4e5050" stroke-width="1.10" stroke-linecap="round"  stroke-linejoin="round" points="1128.0,355.6 1137.5,344.5 1148.6,335.0 1240.0,339.8"/>
<polyline fill="none" stroke="#4e5050" stroke-width="1.10" stroke-linecap="round"  stroke-linejoin="round" points="1128.0,355.6 1128.0,380.0"/>
<polyline fill="none" stroke="#4e5050" stroke-width="1.10" stroke-linecap="round"  stroke-linejoin="round" points="1027.5,38.8 1064.8,45.6 1151.0,38.8"/>
<polyline fill="none" stroke="#4e5050" stroke-width="1.10" stroke-linecap="round"  stroke-linejoin="round" points="1041.0,96.5 1061.4,99.9 1088.6,91.4 1119.1,96.5"/>
<polyline fill="none" stroke="#4e5050" stroke-width="1.10" stroke-linecap="round"  stroke-linejoin="round" points="1127.6,350.9 1126.6,442.5"/>
<polyline fill="none" stroke="#4e5050" stroke-width="1.10" stroke-linecap="round"  stroke-linejoin="round" points="1132.7,445.9 1151.0,435.7"/>
<polyline fill="none" stroke="#4e5050" stroke-width="1.10" stroke-linecap="round"  stroke-linejoin="round" points="1134.4,442.5 1151.0,466.3"/>
<polyline fill="none" stroke="#4e5050" stroke-width="1.10" stroke-linecap="round"  stroke-linejoin="round" points="1201.9,574.0 1200.2,640.2 1218.9,638.5 1224.0,609.6 1229.1,594.4 1224.0,574.0"/>
<polyline fill="none" stroke="#4e5050" stroke-width="1.10" stroke-linecap="round"  stroke-linejoin="round" points="1151.0,692.8 1195.1,655.5 1201.9,640.2"/>
<polyline fill="none" stroke="#4e5050" stroke-width="1.10" stroke-linecap="round"  stroke-linejoin="round" points="1201.9,574.0 1249.4,597.8 1341.1,597.8 1388.6,601.2 1402.2,607.9 1419.2,624.9 1449.7,669.1 1463.3,686.0 1465.0,699.6 1466.7,713.2"/>
<polyline fill="none" stroke="#4e5050" stroke-width="1.10" stroke-linecap="round"  stroke-linejoin="round" points="1341.1,574.0 1344.5,594.4"/>
<polyline fill="none" stroke="#4e5050" stroke-width="1.10" stroke-linecap="round"  stroke-linejoin="round" points="1388.6,574.0 1409.0,584.2 1412.4,607.9 1409.0,624.9"/>
<polyline fill="none" stroke="#4e5050" stroke-width="1.10" stroke-linecap="round"  stroke-linejoin="round" points="1483.7,574.0 1485.4,713.2"/>
<polyline fill="none" stroke="#4e5050" stroke-width="1.10" stroke-linecap="round"  stroke-linejoin="round" points="1463.3,699.6 1485.4,699.6"/>
<polyline fill="none" stroke="#4e5050" stroke-width="1.10" stroke-linecap="round"  stroke-linejoin="round" points="1466.7,723.4 1490.5,743.7 1507.4,764.1 1557.0,811.6"/>
<polyline fill="none" stroke="#4e5050" stroke-width="1.10" stroke-linecap="round"  stroke-linejoin="round" points="1201.8,572.2 1200.5,639.4 1199.3,656.8 1159.5,689.2 1134.6,711.5"/>
<polyline fill="none" stroke="#3f4141" stroke-width="1.60" stroke-linecap="round"  stroke-linejoin="round" points="1141.2,652.1 1112.3,689.4"/>
<polygon fill="#3f4141" points="1100.4,692.8 1108.9,688.7 1115.0,696.8 1106.2,702.3"/>
<polyline fill="none" stroke="#3f4141" stroke-width="2.00" stroke-linecap="round"  stroke-linejoin="round" points="1132.7,711.4 1151.0,692.8"/>
<polyline fill="none" stroke="#2f3131" stroke-width="8" stroke-linejoin="round" stroke-linecap="round" points="1565,718.7 964.3,718.7 1158,877"/>
<polyline fill="none" stroke="#434545" stroke-width="1" stroke-dasharray="14 6" points="1565,718.7 964.3,718.7 1158,877"/>
<rect x="851.5" y="32.5" width="705" height="841" fill="none" stroke="#1c1e1f" stroke-width="1"/>
<circle cx="1089.66" cy="398.4" r="7.8" fill="#c0893e" stroke="#e6dfd4" stroke-width="1.1"/>
<rect x="861.2" y="42" width="38.3" height="38.5" rx="5" ry="5" fill="#f2c811"/>
<line x1="871" y1="53.4" x2="889.6" y2="53.4" stroke="#4a4a4a" stroke-width="1.5"/>
<line x1="871" y1="61.5" x2="889.6" y2="61.5" stroke="#4a4a4a" stroke-width="1.5"/>
<line x1="871" y1="69.6" x2="889.6" y2="69.6" stroke="#4a4a4a" stroke-width="1.5"/>
<text x="1495" y="840.8" font-family="Liberation Sans" font-weight="bold" font-size="6.2" fill="#ffffff" textLength="40" lengthAdjust="spacingAndGlyphs">POWERED BY</text>
<circle cx="1540.1" cy="838.7" r="2.9" fill="#ffffff"/>
<text x="1493.5" y="861" font-family="Liberation Sans" font-weight="bold" font-size="31" fill="#ffffff" textLength="49.5" lengthAdjust="spacingAndGlyphs">esrı</text></svg>
</body></html>
